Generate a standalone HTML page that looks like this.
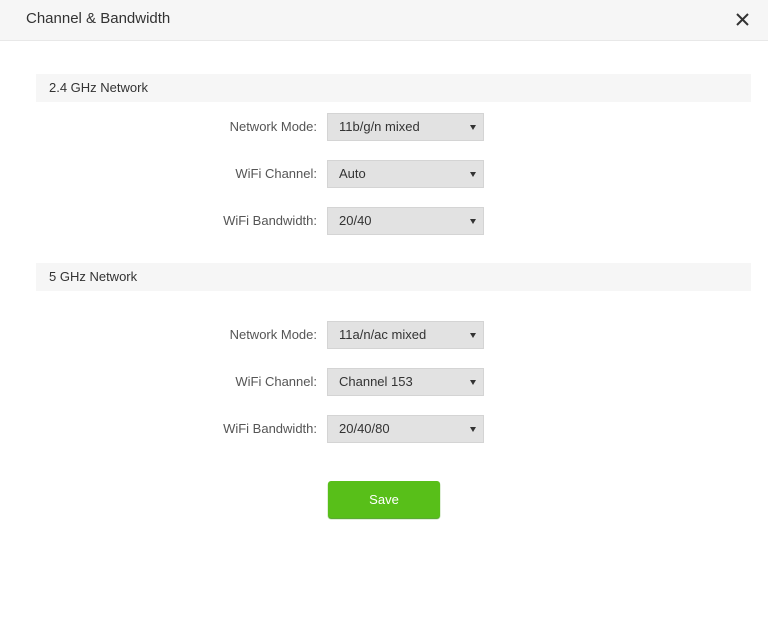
<!DOCTYPE html>
<html><head><style>
body{margin:0;width:768px;height:620px;background:#fff;font-family:"Liberation Sans",sans-serif;position:relative;overflow:hidden}
.hd{position:absolute;left:0;top:0;width:768px;height:40px;background:#f6f6f6;border-bottom:1px solid #e8e8e8}
.hd span{position:absolute;left:26px;top:10px;font-size:15px;color:#333}
.x{position:absolute;left:735px;top:12px;width:15px;height:15px}
.bar{position:absolute;left:36px;width:715px;height:28px;background:#f6f6f6;font-size:13px;color:#333;line-height:28px;text-indent:13px}
.lb{position:absolute;right:451px;font-size:13px;color:#555;line-height:28px}
.sel{position:absolute;left:327px;width:155px;height:26px;background:#e2e2e2;border:1px solid #d4d4d4;font-size:13px;color:#333;line-height:26px;text-indent:11px}
.sel:after{content:"";position:absolute;right:7px;top:11px;border-left:3px solid transparent;border-right:3px solid transparent;border-top:5px solid #333}
.btn{position:absolute;left:328px;top:481px;width:112px;height:37px;background:#58bf19;border-radius:3px;color:#fff;font-size:13px;text-align:center;line-height:37px;box-shadow:0 1px 1px #3c9a0e}
</style></head><body>
<div class="hd"><span>Channel &amp; Bandwidth</span>
<svg class="x" viewBox="0 0 15 15"><path d="M2 2L13 13M13 2L2 13" stroke="#333" stroke-width="2"/></svg></div>
<div class="bar" style="top:74px">2.4 GHz Network</div>
<div class="lb" style="top:113px">Network Mode:</div><div class="sel" style="top:113px">11b/g/n mixed</div>
<div class="lb" style="top:160px">WiFi Channel:</div><div class="sel" style="top:160px">Auto</div>
<div class="lb" style="top:207px">WiFi Bandwidth:</div><div class="sel" style="top:207px">20/40</div>
<div class="bar" style="top:263px">5 GHz Network</div>
<div class="lb" style="top:321px">Network Mode:</div><div class="sel" style="top:321px">11a/n/ac mixed</div>
<div class="lb" style="top:368px">WiFi Channel:</div><div class="sel" style="top:368px">Channel 153</div>
<div class="lb" style="top:415px">WiFi Bandwidth:</div><div class="sel" style="top:415px">20/40/80</div>
<div class="btn">Save</div>
</body></html>
